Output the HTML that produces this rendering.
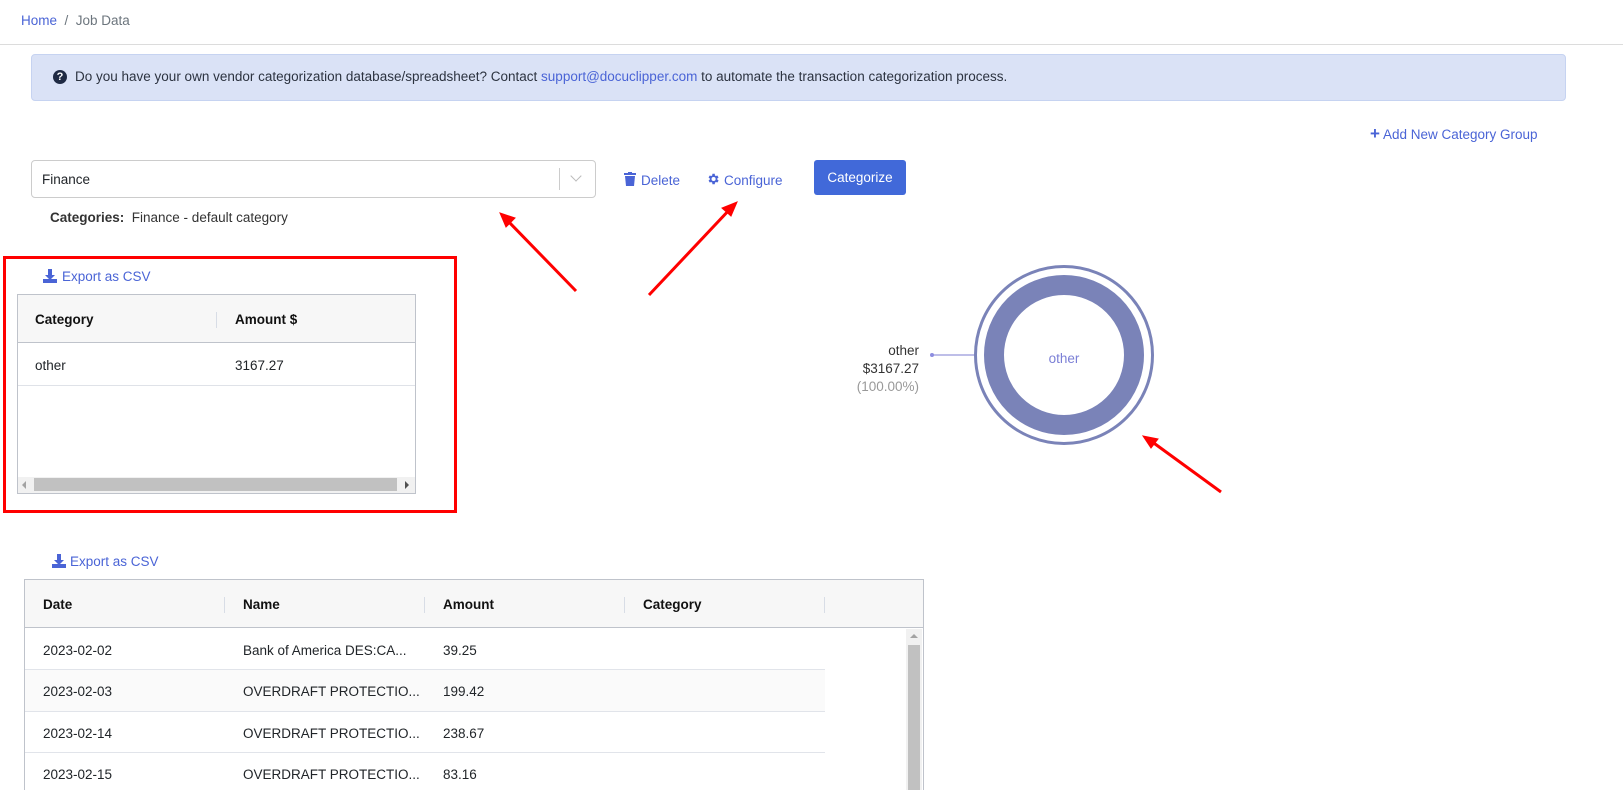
<!DOCTYPE html>
<html><head><meta charset="utf-8"><style>
*{box-sizing:border-box;margin:0;padding:0}
html,body{width:1623px;height:790px;overflow:hidden}
body{background:#fff;font-family:"Liberation Sans",Arial,sans-serif;font-size:13.5px;color:#212529}
#w{position:relative;width:1623px;height:790px;overflow:hidden}
.a{position:absolute;white-space:nowrap}
.blue{color:#4a64d6}
.th{font-weight:bold;color:#111}
.sep{position:absolute;width:1px;height:16px;background:#d8dde6}
</style></head><body><div id="w">
<div class="a" style="left:21px;top:13px;color:#6c757d"><span class="blue">Home</span>&nbsp; / &nbsp;Job Data</div>
<div class="a" style="left:0;top:44px;width:1623px;height:1px;background:#dcdcdc"></div>

<div class="a" style="left:31px;top:54px;width:1535px;height:47px;background:#dae2f6;border:1px solid #c6d3f1;border-radius:4px"></div>
<div class="a" style="left:53px;top:70px;width:14px;height:14px;border-radius:50%;background:#1f2a44;color:#fff;font-size:11px;font-weight:bold;text-align:center;line-height:14px">?</div>
<div class="a" style="left:75px;top:69px;color:#2c3340">Do you have your own vendor categorization database/spreadsheet? Contact <span class="blue">support@docuclipper.com</span> to automate the transaction categorization process.</div>

<div class="a blue" style="left:1370px;top:127px"><b style="font-size:17px;line-height:14px">+</b> Add New Category Group</div>

<div class="a" style="left:31px;top:160px;width:565px;height:38px;border:1px solid #ccc;border-radius:4px"></div>
<div class="a" style="left:42px;top:172px">Finance</div>
<div class="a" style="left:559px;top:168px;width:1px;height:22px;background:#ccc"></div>
<div class="a" style="left:572px;top:172px;width:8px;height:8px;border-right:1.5px solid #bbb;border-bottom:1.5px solid #bbb;transform:rotate(45deg)"></div>

<svg class="a" style="left:624px;top:172px" width="12" height="14" viewBox="0 0 12 14"><rect x="0" y="1" width="12" height="2" fill="#4a64d6"/><rect x="4" y="0" width="4" height="2" fill="#4a64d6"/><path d="M1 4h10l-1 10H2z" fill="#4a64d6"/></svg>
<div class="a blue" style="left:641px;top:173px">Delete</div>
<svg class="a" style="left:706px;top:172px" width="14" height="14" viewBox="0 0 24 24"><path fill="#4a64d6" fill-rule="evenodd" d="M19.4 13a7.5 7.5 0 000-2l2.1-1.6-2-3.5-2.5 1a7 7 0 00-1.7-1L15 3h-4l-.4 2.9a7 7 0 00-1.7 1l-2.5-1-2 3.5L6.5 11a7.5 7.5 0 000 2l-2.1 1.6 2 3.5 2.5-1a7 7 0 001.7 1L11 21h4l.4-2.9a7 7 0 001.7-1l2.5 1 2-3.5zM13 15.5A3.5 3.5 0 1113 8.5a3.5 3.5 0 010 7z"/></svg>
<div class="a blue" style="left:724px;top:173px">Configure</div>
<div class="a" style="left:814px;top:160px;width:92px;height:35px;background:#4169d9;border-radius:3px;color:#fff;text-align:center;line-height:35px">Categorize</div>

<div class="a" style="left:50px;top:210px;color:#333"><b>Categories:</b>&nbsp; Finance - default category</div>

<div class="a" style="left:3px;top:256px;width:454px;height:257px;border:3px solid #f00"></div>
<svg class="a" style="left:43px;top:269px" width="14" height="14" viewBox="0 0 14 14"><path d="M5 0h4v6h3l-5 5-5-5h3z" fill="#4a64d6"/><rect x="0" y="10" width="14" height="4" fill="#4a64d6"/></svg>
<div class="a blue" style="left:62px;top:269px">Export as CSV</div>
<div class="a" style="left:17px;top:294px;width:399px;height:200px;border:1px solid #bfc3cb"></div>
<div class="a" style="left:18px;top:295px;width:397px;height:48px;background:#f7f7f7;border-bottom:1px solid #bfc3cb"></div>
<div class="a th" style="left:35px;top:312px">Category</div>
<div class="sep" style="left:216px;top:312px"></div>
<div class="a th" style="left:235px;top:312px">Amount $</div>
<div class="a" style="left:35px;top:358px">other</div>
<div class="a" style="left:235px;top:358px">3167.27</div>
<div class="a" style="left:18px;top:385px;width:397px;height:1px;background:#dfe2e8"></div>
<div class="a" style="left:18px;top:477px;width:397px;height:16px;background:#f1f1f1"></div>
<div class="a" style="left:34px;top:478px;width:363px;height:13px;background:#c1c1c1"></div>
<div class="a" style="left:22px;top:481px;width:0;height:0;border:4px solid transparent;border-right:4px solid #a3a3a3;border-left:0"></div>
<div class="a" style="left:405px;top:481px;width:0;height:0;border:4px solid transparent;border-left:4px solid #505050;border-right:0"></div>

<svg class="a" style="left:0;top:0" width="1623" height="790">
<g stroke="#f00" stroke-width="3" fill="#f00">
<line x1="576" y1="291" x2="506" y2="219"/><polygon points="500,213 515,218 506,227" stroke-width="1"/>
<line x1="649" y1="295" x2="731" y2="208"/><polygon points="737,202 731,216 722,208" stroke-width="1"/>
<line x1="1221" y1="492" x2="1151" y2="441"/><polygon points="1143,436 1158,439 1151,448" stroke-width="1"/>
</g>
<circle cx="1064" cy="355" r="88.5" fill="none" stroke="#7a83b8" stroke-width="3"/>
<circle cx="1064" cy="355" r="70" fill="none" stroke="#7a83b8" stroke-width="20"/>
<line x1="932" y1="355" x2="974" y2="355" stroke="#a9a9e0" stroke-width="1.5"/>
<circle cx="932" cy="355" r="2" fill="#8d8de0"/>
<text x="1064" y="363" text-anchor="middle" font-family="Liberation Sans" font-size="13.5" fill="#7b7fd6">other</text>
<text x="919" y="355" text-anchor="end" font-family="Liberation Sans" font-size="13.5" fill="#333">other</text>
<text x="919" y="373" text-anchor="end" font-family="Liberation Sans" font-size="13.5" fill="#333">$3167.27</text>
<text x="919" y="391" text-anchor="end" font-family="Liberation Sans" font-size="13.5" fill="#999">(100.00%)</text>
</svg>

<svg class="a" style="left:52px;top:554px" width="14" height="14" viewBox="0 0 14 14"><path d="M5 0h4v6h3l-5 5-5-5h3z" fill="#4a64d6"/><rect x="0" y="10" width="14" height="4" fill="#4a64d6"/></svg>
<div class="a blue" style="left:70px;top:554px">Export as CSV</div>
<div class="a" style="left:24px;top:579px;width:900px;height:211px;border:1px solid #bfc3cb;border-bottom:0"></div>
<div class="a" style="left:25px;top:580px;width:898px;height:48px;background:#f7f7f7;border-bottom:1px solid #bfc3cb"></div>
<div class="a th" style="left:43px;top:597px">Date</div><div class="sep" style="left:224px;top:597px"></div>
<div class="a th" style="left:243px;top:597px">Name</div><div class="sep" style="left:424px;top:597px"></div>
<div class="a th" style="left:443px;top:597px">Amount</div><div class="sep" style="left:624px;top:597px"></div>
<div class="a th" style="left:643px;top:597px">Category</div><div class="sep" style="left:824px;top:597px"></div>

<div class="a" style="left:25px;top:670px;width:800px;height:42px;background:#fafafa"></div>
<div class="a" style="left:25px;top:669px;width:800px;height:1px;background:#e1e4ea"></div>
<div class="a" style="left:25px;top:711px;width:800px;height:1px;background:#e1e4ea"></div>
<div class="a" style="left:25px;top:752px;width:800px;height:1px;background:#e1e4ea"></div>
<div class="a" style="left:43px;top:643px">2023-02-02</div><div class="a" style="left:243px;top:643px">Bank of America DES:CA...</div><div class="a" style="left:443px;top:643px">39.25</div>
<div class="a" style="left:43px;top:684px">2023-02-03</div><div class="a" style="left:243px;top:684px">OVERDRAFT PROTECTIO...</div><div class="a" style="left:443px;top:684px">199.42</div>
<div class="a" style="left:43px;top:726px">2023-02-14</div><div class="a" style="left:243px;top:726px">OVERDRAFT PROTECTIO...</div><div class="a" style="left:443px;top:726px">238.67</div>
<div class="a" style="left:43px;top:767px">2023-02-15</div><div class="a" style="left:243px;top:767px">OVERDRAFT PROTECTIO...</div><div class="a" style="left:443px;top:767px">83.16</div>
<div class="a" style="left:906px;top:629px;width:16px;height:161px;background:#f1f1f1"></div>
<div class="a" style="left:908px;top:645px;width:12px;height:145px;background:#c1c1c1"></div>
<div class="a" style="left:910px;top:634px;width:0;height:0;border:4px solid transparent;border-bottom:4px solid #a3a3a3;border-top:0"></div>
</div></body></html>
